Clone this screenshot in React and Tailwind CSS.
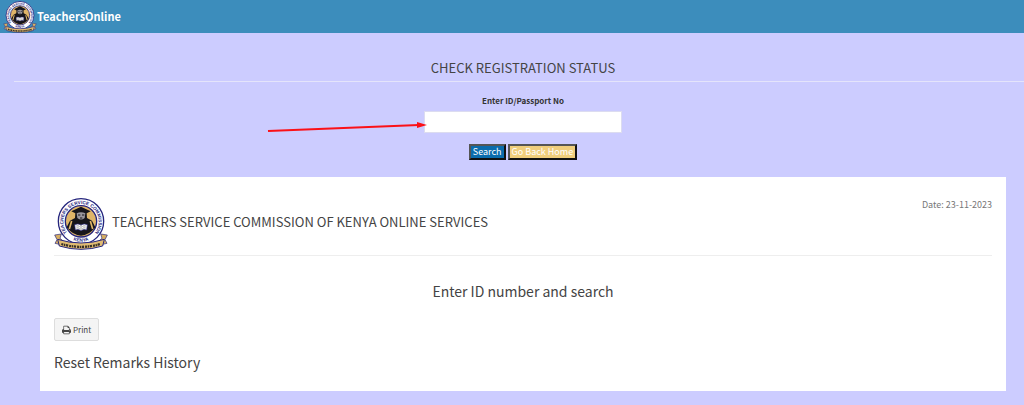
import { useId, useState } from "react";

function CommissionLogo({ className }) {
  const id = useId();

  return (
    <svg viewBox="0 0 162 156" className={className} aria-hidden="true">
      <defs>
        <path id={`${id}-ring`} d="M41 106 A53 53 0 1 1 121 106" />
        <path id={`${id}-base`} d="M38 113 A60 60 0 0 0 124 113" />
      </defs>
      <circle cx="81" cy="70" r="68" fill="#fff" stroke="#25257d" strokeWidth="4" />
      <circle cx="81" cy="70" r="47" fill="#dfb568" stroke="#25257d" strokeWidth="4" />
      <g fill="#25257d" fontFamily="Liberation Sans, sans-serif" fontWeight="700">
        <text fontSize="14">
          <textPath href={`#${id}-ring`} startOffset="50%" textAnchor="middle">
            TEACHERS SERVICE COMMISSION
          </textPath>
        </text>
        <text fontSize="14">
          <textPath href={`#${id}-base`} startOffset="50%" textAnchor="middle">
            KENYA
          </textPath>
        </text>
      </g>
      {/* scholar, book and supporters */}
      <path d="M81 26 L110 40 L98 46 L99 60 L114 68 L124 88 Q104 113 81 113 Q58 113 38 88 L48 68 L63 60 L64 46 L52 40 Z" fill="#16151b" />
      <path d="M68 46 Q81 39 94 46 L92 60 Q81 69 70 60 Z" fill="#9a979e" />
      <path d="M72 51 h7 M84 51 h7 M78 60 h7" stroke="#16151b" strokeWidth="3" />
      <path d="M62 80 Q72 75 81 81 Q90 75 100 80 L98 96 Q90 92 81 98 Q72 92 64 96 Z" fill="#fff" stroke="#25257d" strokeWidth="2" />
      <path d="M81 81 V98 M67 84 Q73 82 77 86 M67 90 Q73 88 77 92 M95 84 Q89 82 85 86 M95 90 Q89 88 85 92" fill="none" stroke="#777" strokeWidth="2" />
      <path d="M53 69 L46 93 M109 69 L116 93" stroke="#dfb568" strokeWidth="5" />
      {/* motto ribbon */}
      <path d="M2 111 L22 108 L18 121 L31 132 L25 141 L3 136 L9 125 Z M160 111 L140 108 L144 121 L131 132 L137 141 L159 136 L153 125 Z" fill="#d6ae62" stroke="#25257d" strokeWidth="2" />
      <path d="M11 124 Q81 146 151 124 L146 144 Q81 164 16 144 Z" fill="#e0bb72" stroke="#25257d" strokeWidth="3" />
      <path d="M22 138 Q81 155 140 138" fill="none" stroke="#383126" strokeWidth="7" strokeDasharray="6 2 4 2 7 3" />
    </svg>
  );
}

function PrintIcon() {
  return (
    <svg viewBox="0 0 1664 1792" fill="currentColor" className="h-[10px] w-[9px]" aria-hidden="true">
      <path d="M384 1536h896v-256h-896v256zM384 896h896v-384h-160q-40 0-68-28t-28-68v-160h-640v640zM1536 960q0-26-19-45t-45-19-45 19-19 45 19 45 45 19 45-19 19-45zM1664 960v416q0 13-9.5 22.5t-22.5 9.5h-224v160q0 40-28 68t-68 28h-960q-40 0-68-28t-28-68v-160h-224q-13 0-22.5-9.5t-9.5-22.5v-416q0-79 56.5-135.5t135.5-56.5h64v-544q0-40 28-68t68-28h672q40 0 88 20t76 48l152 152q28 28 48 76t20 88v256h64q79 0 135.5 56.5t56.5 135.5z" />
    </svg>
  );
}

function PointerArrow() {
  return (
    <svg
      viewBox="0 0 160 12"
      className="pointer-events-none absolute right-full top-[10px] -mr-[3px] h-3 w-40"
      aria-hidden="true"
    >
      <path d="M1 10 L152 4" stroke="#fb1118" strokeWidth="2" />
      <path d="M150 1 L160 4 L150 7 Z" fill="#fb1118" />
    </svg>
  );
}

export default function App() {
  const [idNumber, setIdNumber] = useState("");

  return (
    <div className="min-h-screen bg-[#ccccff] pb-3 font-['Noto_Sans_CJK_SC',sans-serif] text-[#444]">
      <header className="flex h-[33px] items-center bg-[#3c8dbc] pl-[3px]">
        <a href="#" className="flex items-center text-[11px] font-bold text-white">
          <CommissionLogo className="h-8 w-[34px]" />
          TeachersOnline
        </a>
      </header>

      <main>
        <form className="text-center" onSubmit={(e) => e.preventDefault()}>
          <h1 className="ml-[14px] border-b border-[#e4e4fb] pb-[3px] pl-2 pt-[25px] text-[13px] leading-5">
            CHECK REGISTRATION STATUS
          </h1>
          <div className="flex flex-col items-center pl-[22px]">
            <label htmlFor="id-number" className="mt-[11px] text-[8px] font-bold leading-4 text-[#333]">
              Enter ID/Passport No
            </label>
            <div className="relative mt-[2px]">
              <input
                id="id-number"
                type="text"
                value={idNumber}
                onChange={(e) => setIdNumber(e.target.value)}
                className="block h-[22px] w-[198px] border border-[#dcdcf0] bg-white px-2 text-[9px]"
              />
              <PointerArrow />
            </div>
            <div className="mt-[11px] flex gap-[2px] text-[9px] leading-3 text-white">
              <button
                type="submit"
                className="h-4 border-2 border-b-[#111] border-l-[#555] border-r-[#111] border-t-[#555] bg-[#0b6cac] px-[2px]"
              >
                Search
              </button>
              <button
                type="button"
                className="h-4 border-2 border-b-[#111] border-l-[#555] border-r-[#111] border-t-[#555] bg-[#f0ce7c] px-[2px]"
              >
                Go Back Home
              </button>
            </div>
          </div>
        </form>

        <section className="ml-10 mr-[18px] mt-[17px] bg-white px-[14px] pb-[17px] pt-5">
          <div className="flex items-start border-b border-[#eee] pb-1">
            <CommissionLogo className="h-[54px] w-[54px]" />
            <h2 className="ml-1 mt-[15px] text-[13px] leading-5">
              TEACHERS SERVICE COMMISSION OF KENYA ONLINE SERVICES
            </h2>
            <p className="ml-auto text-[9px] leading-4 text-[#777]">Date: 23-11-2023</p>
          </div>
          <h3 className="mt-[23px] text-center text-[14px] leading-6">Enter ID number and search</h3>
          <button
            type="button"
            className="mt-[15px] flex h-[23px] items-center gap-[2px] rounded-xs border border-[#ddd] bg-[#f4f4f4] px-[7px] text-[8px]"
          >
            <PrintIcon />
            Print
          </button>
          <h3 className="mt-[9px] text-[14px] leading-6">Reset Remarks History</h3>
        </section>
      </main>
    </div>
  );
}
